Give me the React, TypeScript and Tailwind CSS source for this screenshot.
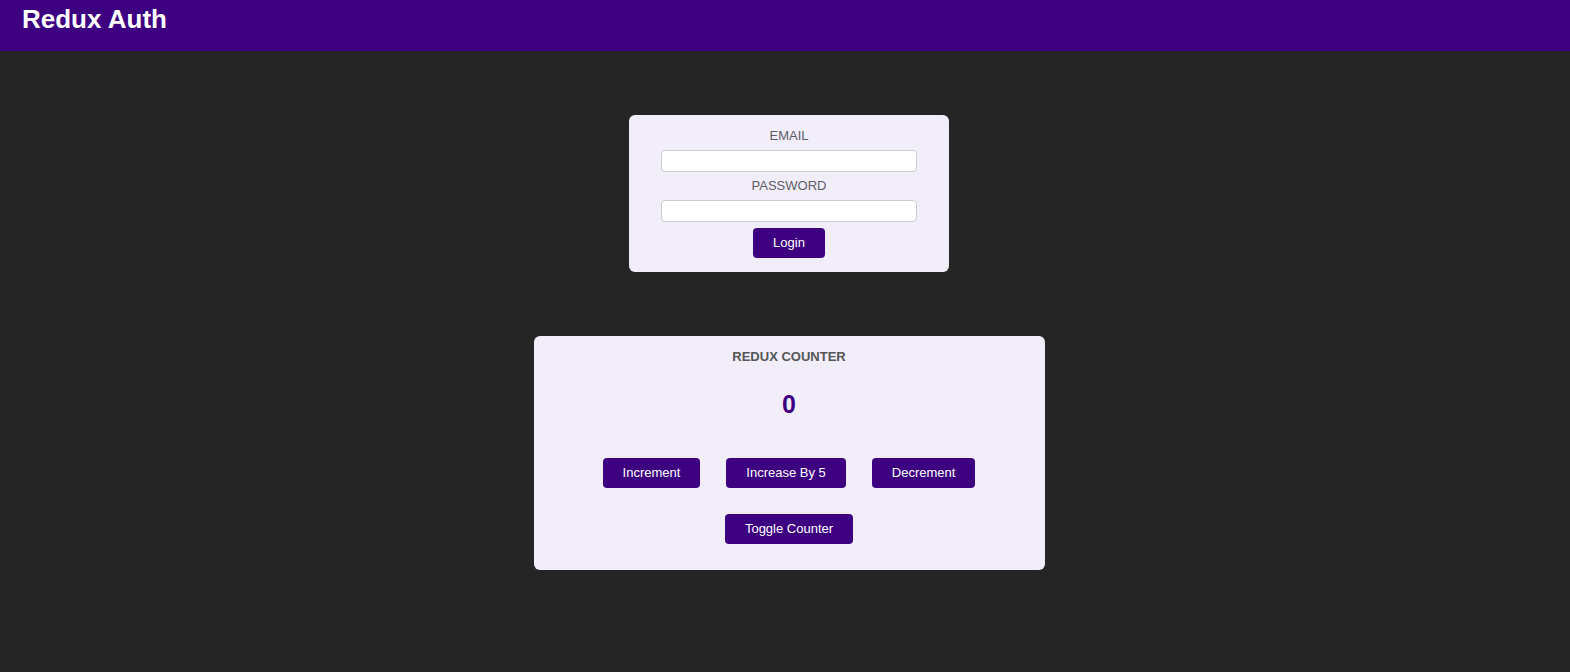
import { useState } from "react";

const btn =
  "bg-[#3c0080] text-white text-[13px] leading-[16px] rounded-[4px] px-5 h-[30px] font-['Liberation_Sans',Arial,sans-serif]";

function Header() {
  return (
    <header className="h-[51px] bg-[#3c0080] px-[22px]">
      <h1 className="text-white font-bold text-[26px] leading-[38px]">Redux Auth</h1>
    </header>
  );
}

function LoginForm() {
  return (
    <div className="w-[320px] mx-auto mt-[64px] bg-[#f1eef9] rounded-[6px] px-[32px] pt-[13px] pb-[14px] flex flex-col items-center">
      <label className="text-[13px] leading-[16px] text-[#5c5c66]">EMAIL</label>
      <input className="mt-[6px] w-[256px] h-[22px] bg-white border border-[#ccc] rounded-[4px]" />
      <label className="mt-[6px] text-[13px] leading-[16px] text-[#5c5c66]">PASSWORD</label>
      <input type="password" className="mt-[6px] w-[256px] h-[22px] bg-white border border-[#ccc] rounded-[4px]" />
      <button className={`${btn} mt-[6px]`}>Login</button>
    </div>
  );
}

function Counter() {
  const [count, setCount] = useState(0);
  const [show, setShow] = useState(true);
  return (
    <div className="w-[511px] mx-auto mt-[64px] bg-[#f1eef9] rounded-[6px] pt-[13px] pb-[26px] flex flex-col items-center">
      <h2 className="text-[13px] leading-[16px] font-bold text-[#555]">REDUX COUNTER</h2>
      <div className="mt-[24px] h-[30px] text-[25px] leading-[30px] font-bold text-[#3c0080]">
        {show ? count : ""}
      </div>
      <div className="mt-[39px] flex gap-[26px]">
        <button className={`${btn} h-[29px]`} onClick={() => setCount(count + 1)}>Increment</button>
        <button className={`${btn} h-[29px]`} onClick={() => setCount(count + 5)}>Increase By 5</button>
        <button className={`${btn} h-[29px]`} onClick={() => setCount(count - 1)}>Decrement</button>
      </div>
      <button className={`${btn} mt-[26px]`} onClick={() => setShow(!show)}>Toggle Counter</button>
    </div>
  );
}

export default function App() {
  return (
    <div className="min-h-[672px] bg-[#252525] font-['Liberation_Sans',Arial,sans-serif]">
      <Header />
      <main className="pl-[8px]">
        <LoginForm />
        <Counter />
      </main>
    </div>
  );
}
